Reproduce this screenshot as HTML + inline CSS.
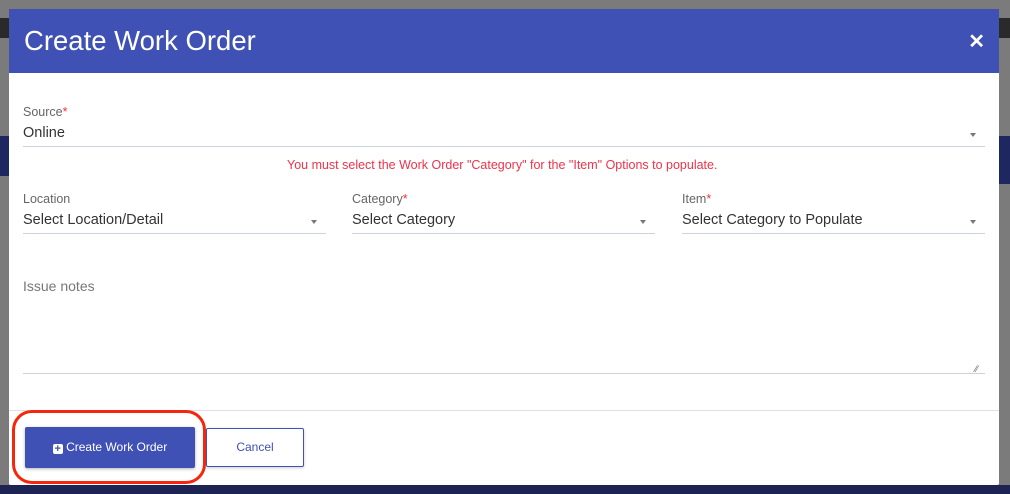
<!DOCTYPE html>
<html><head><style>
*{margin:0;padding:0;box-sizing:border-box}
body{width:1010px;height:494px;overflow:hidden;background:#7b7b7b;font-family:"Liberation Sans",Arial,sans-serif;position:relative}
.bg{position:absolute}
.modal{position:absolute;left:9px;top:9px;width:990px;height:476px;background:#fff;border-radius:2px}
.hdr{height:64px;background:#3f51b5;color:#fff;position:relative}
.hdr h1{position:absolute;left:15px;top:16px;font-weight:normal;font-size:27.5px}
.x{position:absolute;right:14px;top:20px;font-size:20px;font-weight:bold}
.lbl{position:absolute;font-size:12.5px;color:#666}
.lbl b{color:#e33;font-weight:normal}
.val{position:absolute;font-size:14.5px;color:#333}
.line{position:absolute;height:1px;background:#ccd3dc}
.arr{position:absolute;width:0;height:0;border-left:3.5px solid transparent;border-right:3.5px solid transparent;border-top:4px solid #777}
</style></head><body>
<div class="bg" style="left:0;top:18px;width:9px;height:20px;background:#2a2a2a"></div>
<div class="bg" style="left:0;top:136px;width:9px;height:40px;background:#1f2760"></div>
<div class="bg" style="left:999px;top:136px;width:11px;height:48px;background:#1f2760"></div>
<div class="bg" style="left:999px;top:18px;width:11px;height:20px;background:#2a2a2a"></div>
<div class="bg" style="left:0;top:485px;width:1010px;height:9px;background:#1d2352"></div>
<div class="modal">
 <div class="hdr"><h1>Create Work Order</h1><span class="x">✕</span></div>
 <div class="lbl" style="left:14px;top:96px">Source<b>*</b></div>
 <div class="val" style="left:14px;top:116px">Online</div>
 <div class="line" style="left:14px;top:137px;width:962px"></div>
 <div class="arr" style="left:961px;top:124px"></div>
 <div style="position:absolute;left:278px;top:149px;font-size:12.5px;color:#f0324a">You must select the Work Order "Category" for the "Item" Options to populate.</div>
 <div class="lbl" style="left:14px;top:183px">Location</div>
 <div class="val" style="left:14px;top:203px">Select Location/Detail</div>
 <div class="line" style="left:14px;top:224px;width:303px"></div>
 <div class="arr" style="left:302px;top:211px"></div>
 <div class="lbl" style="left:343px;top:183px">Category<b>*</b></div>
 <div class="val" style="left:343px;top:203px">Select Category</div>
 <div class="line" style="left:343px;top:224px;width:303px"></div>
 <div class="arr" style="left:631px;top:211px"></div>
 <div class="lbl" style="left:673px;top:183px">Item<b>*</b></div>
 <div class="val" style="left:673px;top:203px">Select Category to Populate</div>
 <div class="line" style="left:673px;top:224px;width:303px"></div>
 <div class="arr" style="left:961px;top:211px"></div>
 <div class="val" style="left:14px;top:269px;color:#777;font-size:14px">Issue notes</div>
 <div class="line" style="left:14px;top:364px;width:962px"></div>
 <div style="position:absolute;left:966px;top:355px;font-size:9px;color:#666">⁄⁄</div>
 <div class="line" style="left:0;top:401px;width:990px;background:#e0e0e0"></div>
 <div style="position:absolute;left:16px;top:418px;width:170px;height:41px;background:#3f51b5;border-radius:2px;color:#fff;font-size:12px;text-align:center;line-height:41px;box-shadow:0 1px 3px rgba(0,0,0,.3)"><span style="display:inline-block;width:10px;height:10px;background:#fff;border-radius:2px;color:#3f51b5;font-size:11px;line-height:10px;font-weight:bold;vertical-align:-1px">+</span> Create Work Order</div>
 <div style="position:absolute;left:197px;top:419px;width:98px;height:39px;border:1px solid #3f51b5;border-radius:2px;color:#3f51b5;font-size:12px;text-align:center;line-height:37px;box-shadow:0 1px 3px rgba(0,0,0,.2)">Cancel</div>
</div>
<div style="position:absolute;left:12px;top:410px;width:194px;height:74px;border:3px solid #f5260c;border-radius:20px"></div>
</body></html>
